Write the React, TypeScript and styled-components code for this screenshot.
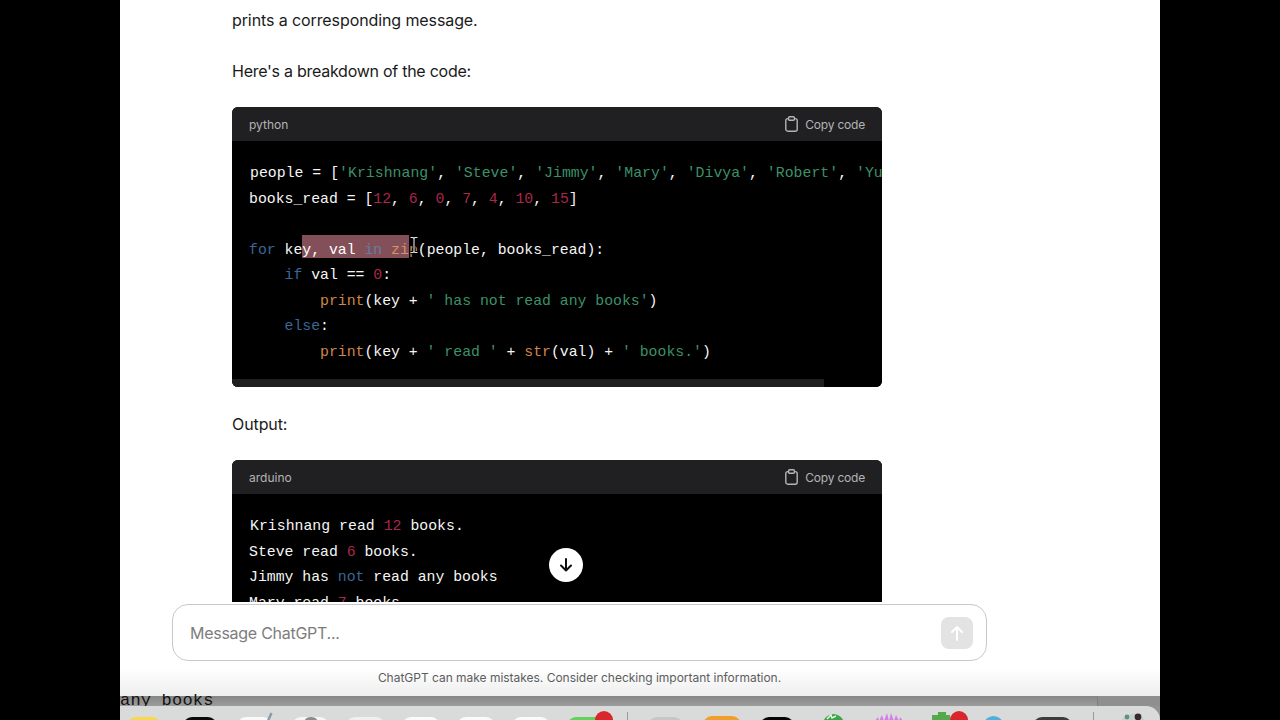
import React from "react";
import styled, { createGlobalStyle } from "styled-components";

const Global = createGlobalStyle`
  html, body { margin: 0; padding: 0; background: #000; height: 100%; overflow: hidden; }
  #root { height: 100%; }
`;

const Page = styled.div`
  width: 1280px; height: 720px; background: #000; display: flex; justify-content: center; overflow: hidden;
`;
const Screen = styled.div`
  width: 1040px; height: 720px; background: #939393; display: flex; flex-direction: column; position: relative; overflow: hidden;
`;
const Chat = styled.main`
  height: 696px; flex: none; position: relative; overflow: hidden; padding: 8px 0 0 112px; box-sizing: border-box; background: #fff;
  font-family: Inter, "Liberation Sans", sans-serif; color: #0d0d0d;
`;
const Thread = styled.div`
  width: 650px; display: flex; flex-direction: column;
`;
const Para = styled.p<{ $after: number; $track: number }>`
  margin: 0 0 ${p => p.$after}px; font-size: 16px; line-height: 24px; letter-spacing: ${p => p.$track}px; color: #1a1a1a;
`;
const CodeCard = styled.section<{ $after?: number }>`
  background: #000; border-radius: 6px; overflow: hidden; margin-bottom: ${p => p.$after ?? 0}px; flex: none;
`;
const CodeHead = styled.header`
  height: 34px; background: #202023; display: flex; align-items: center; justify-content: space-between; padding: 0 17px;
  font-size: 12px; color: #b4b4b4;
`;
const CopyBtn = styled.span`
  display: flex; align-items: center; gap: 7px; letter-spacing: -0.2px;
`;
const CodeBody = styled.div`
  padding: 20px 0 0 17px; font-family: "Liberation Mono", "DejaVu Sans Mono", monospace; font-size: 14.8px;
  color: #f6f6f6; overflow: hidden; position: relative;
`;
const CodeLine = styled.div<{ $indent?: number; $lead?: boolean }>`
  height: 25.5px; line-height: 25.5px; white-space: pre;
  padding-left: ${p => (p.$indent ?? 0) * 8.88 + (p.$lead ? 1 : 0)}px;
  letter-spacing: ${p => (p.$lead ? "0.03px" : "0")};
`;
const ScrollTrack = styled.div`
  height: 8px; background: #000; margin-top: 14px; display: flex;
`;
const ScrollThumb = styled.div`
  width: 592px; background: #1f1f1f;
`;
const Str = styled.span` color: #3c9169; `;
const Num = styled.span` color: #ab274a; `;
const Kw = styled.span` color: #3a6796; `;
const Fn = styled.span` color: #d2854b; `;
const Sel = styled.span`
  background: #83505a; color: #fff; padding-top: 7px;
`;
const SelKw = styled.span` color: #5f7fa2; `;
const SelFn = styled.span` color: #d6935e; `;
const CursorMark = styled.svg`
  position: absolute; left: 177px; top: 95px;
`;
const Fade = styled.div`
  position: absolute; left: 0; right: 0; top: 602px; bottom: 0; background: linear-gradient(#fff 0%, #fff 70%, #eeeeee 100%);
`;
const Composer = styled.div`
  position: absolute; left: 52px; top: 604px; width: 815px; height: 57px; box-sizing: border-box; border: 1px solid #c9c9c9; border-radius: 16px;
  background: #fff; display: flex; align-items: center; justify-content: space-between; padding: 0 13px 0 17px;
`;
const Placeholder = styled.span`
  font-size: 16px; color: #7d7d7d; letter-spacing: -0.27px;
`;
const SendBtn = styled.span`
  width: 32px; height: 32px; border-radius: 8px; background: #e3e3e3; display: flex; align-items: center; justify-content: center;
`;
const Notice = styled.div`
  position: absolute; left: 52px; top: 670px; width: 815px; text-align: center; font-size: 12px; line-height: 16px; color: #5d5d5d; letter-spacing: -0.02px;
`;
const DownBtn = styled.span`
  position: absolute; left: 429px; top: 548px; width: 34px; height: 34px; border-radius: 50%; background: #fff;
  display: flex; align-items: center; justify-content: center;
`;
const Bar = styled.div`
  height: 10px; flex: none; background: linear-gradient(#868686, #9c9c9c); position: relative;
  font-family: "Liberation Mono", monospace; font-size: 17px; color: #111;
`;
const BarText = styled.span`
  position: absolute; left: 0; top: -2px; height: 12px; overflow: hidden; line-height: 13px; letter-spacing: 0.2px;
`;
const BarEnd = styled.span`
  position: absolute; right: 0; top: 0; bottom: 0; width: 62px; background: #8f8f8f; border-left: 1px solid #7f7f7f;
`;
const Dock = styled.footer`
  flex: 1; background: #d9dbda; border-radius: 0 20px 0 0; display: flex; align-items: flex-start; overflow: hidden;
`;
const Tile = styled.span<{ $ml: number; $w: number; $c: string; $t?: number; $round?: boolean }>`
  position: relative; flex: none; margin-left: ${p => p.$ml}px; margin-top: ${p => p.$t ?? 11}px; width: ${p => p.$w}px; height: 40px;
  border-radius: ${p => (p.$round ? "50%" : "9px")}; background: ${p => p.$c};
`;
const Glyph = styled.svg`
  position: absolute; overflow: visible;
`;
const Badge = styled.span<{ $x: number }>`
  position: absolute; left: ${p => p.$x}px; top: -6px; width: 18px; height: 18px; border-radius: 50%; background: #d9252c;
`;
const DockSep = styled.span<{ $ml: number }>`
  flex: none; margin-left: ${p => p.$ml}px; margin-top: 6px; width: 1px; height: 14px; background: #9a9a9a;
`;
const PlainIcon = styled.span<{ $ml: number; $w: number }>`
  position: relative; flex: none; margin-left: ${p => p.$ml}px; margin-top: 6px; width: ${p => p.$w}px; height: 14px;
`;

const Clipboard = () => (
  <svg width="13" height="16" viewBox="0 0 13 16" fill="none" stroke="#b4b4b4" strokeWidth="1.4">
    <rect x="0.8" y="2.6" width="11.4" height="12.6" rx="2" />
    <rect x="3.6" y="0.8" width="5.8" height="3.4" rx="1" fill="#202023" />
  </svg>
);

export default function App() {
  return (
    <Page>
      <Global />
      <Screen>
        <Chat>
          <Thread>
            <Para $after={27} $track={-0.1}>prints a corresponding message.</Para>
            <Para $after={24} $track={-0.26}>Here's a breakdown of the code:</Para>
            <CodeCard $after={25}>
              <CodeHead>
                <span>python</span>
                <CopyBtn><Clipboard />Copy code</CopyBtn>
              </CodeHead>
              <CodeBody>
                <CodeLine $lead>people = [<Str>'Krishnang'</Str>, <Str>'Steve'</Str>, <Str>'Jimmy'</Str>, <Str>'Mary'</Str>, <Str>'Divya'</Str>, <Str>'Robert'</Str>, <Str>'Yu</Str></CodeLine>
                <CodeLine>books_read = [<Num>12</Num>, <Num>6</Num>, <Num>0</Num>, <Num>7</Num>, <Num>4</Num>, <Num>10</Num>, <Num>15</Num>]</CodeLine>
                <CodeLine />
                <CodeLine><Kw>for</Kw> ke<Sel>y, val <SelKw>in</SelKw> <SelFn>zi</SelFn></Sel><Fn>p</Fn>(people, books_read):</CodeLine>
                <CodeLine $indent={4}><Kw>if</Kw> val == <Num>0</Num>:</CodeLine>
                <CodeLine $indent={8}><Fn>print</Fn>(key + <Str>' has not read any books'</Str>)</CodeLine>
                <CodeLine $indent={4}><Kw>else</Kw>:</CodeLine>
                <CodeLine $indent={8}><Fn>print</Fn>(key + <Str>' read '</Str> + <Fn>str</Fn>(val) + <Str>' books.'</Str>)</CodeLine>
                <CursorMark width="10" height="18" viewBox="0 0 10 18" fill="none">
                  <path d="M1.5 1.5h2.5l1 1 1-1h2.5M5 2.5v13M1.5 16.5h2.5l1-1 1 1h2.5" stroke="#000" strokeWidth="2.8" />
                  <path d="M1.5 1.5h2.5l1 1 1-1h2.5M5 2.5v13M1.5 16.5h2.5l1-1 1 1h2.5" stroke="#e8e8e8" strokeWidth="1.1" />
                </CursorMark>
              </CodeBody>
              <ScrollTrack><ScrollThumb /></ScrollTrack>
            </CodeCard>
            <Para $after={24} $track={-0.1}>Output:</Para>
            <CodeCard>
              <CodeHead>
                <span>arduino</span>
                <CopyBtn><Clipboard />Copy code</CopyBtn>
              </CodeHead>
              <CodeBody>
                <CodeLine $lead>Krishnang read <Num>12</Num> books.</CodeLine>
                <CodeLine>Steve read <Num>6</Num> books.</CodeLine>
                <CodeLine>Jimmy has <Kw>not</Kw> read any books</CodeLine>
                <CodeLine>Mary read <Num>7</Num> books.</CodeLine>
              </CodeBody>
            </CodeCard>
          </Thread>
          <DownBtn>
            <svg width="16" height="16" viewBox="0 0 16 16" fill="none" stroke="#0d0d0d" strokeWidth="2" strokeLinecap="round" strokeLinejoin="round">
              <path d="M8 2v11.5M3 8.5l5 5 5-5" />
            </svg>
          </DownBtn>
          <Fade />
          <Composer>
            <Placeholder>Message ChatGPT...</Placeholder>
            <SendBtn>
              <svg width="18" height="18" viewBox="0 0 18 18" fill="none" stroke="#fff" strokeWidth="2" strokeLinecap="round" strokeLinejoin="round">
                <path d="M9 16V3M4 8l5-5 5 5" />
              </svg>
            </SendBtn>
          </Composer>
          <Notice>ChatGPT can make mistakes. Consider checking important information.</Notice>
        </Chat>
        <Bar>
          <BarText>any books</BarText>
          <BarEnd />
        </Bar>
        <Dock>
          <Tile $ml={7} $w={34} $c="#f6d84a" />
          <Tile $ml={22} $w={34} $c="#0a0a0a" />
          <Tile $ml={20} $w={35} $c="#fafafa">
            <Glyph width="8" height="10" viewBox="0 0 8 10" style={{ left: 29, top: -5 }} fill="none">
              <path d="M1.5 10L5.5 1" stroke="#8a98a6" strokeWidth="2.4" />
            </Glyph>
          </Tile>
          <Tile $ml={20} $w={37} $c="#f6f6f6">
            <Glyph width="14" height="4" viewBox="0 0 14 4" style={{ left: 12, top: 0 }}>
              <ellipse cx="7" cy="3" rx="6" ry="3" fill="#8c8c8c" />
            </Glyph>
          </Tile>
          <Tile $ml={17} $w={39} $c="#efefef" />
          <Tile $ml={17} $w={38} $c="#fbfbfb" />
          <Tile $ml={17} $w={38} $c="#fbfbfb" />
          <Tile $ml={17} $w={38} $c="#fbfbfb" />
          <Tile $ml={17} $w={38} $c="#5fd35a">
            <Badge $x={28} />
          </Tile>
          <DockSep $ml={22} />
          <Tile $ml={20} $w={35} $c="#c6c6c6" />
          <Tile $ml={20} $w={38} $c="#ee9f2c" $t={10} />
          <Tile $ml={19} $w={34} $c="#050505" />
          <Tile $ml={26} $w={27} $c="#3aa64a" $t={8} $round>
            <Glyph width="12" height="5" viewBox="0 0 12 5" style={{ left: 6, top: 1 }}>
              <path d="M1 4L5 0l1 3 4-2" stroke="#e8f5e8" strokeWidth="1.5" fill="none" />
            </Glyph>
          </Tile>
          <PlainIcon $ml={26} $w={32}>
            <Glyph width="32" height="8" viewBox="0 0 32 8" style={{ left: 0, top: 1 }}>
              <path d="M2 8L5 4l1 4 3-6 2 6 3-8 2 8 2-8 3 8 2-6 3 6 1-4 3 4z" fill="#d27fe6" />
            </Glyph>
          </PlainIcon>
          <PlainIcon $ml={27} $w={18}>
            <Glyph width="18" height="8" viewBox="0 0 18 8" style={{ left: 0, top: 0 }}>
              <path d="M6 0h8v3h4v5H0V3h6z" fill="#55a84b" />
            </Glyph>
            <Badge $x={18} style={{ top: -1 }} />
          </PlainIcon>
          <Tile $ml={30} $w={27} $c="#4fb0dc" $t={10} $round />
          <Tile $ml={26} $w={39} $c="#3c3c3c" />
          <DockSep $ml={21} />
          <PlainIcon $ml={24} $w={30}>
            <Glyph width="30" height="8" viewBox="0 0 30 8" style={{ left: 0, top: 1 }}>
              <path d="M3 8a12 12 0 0 1 12-7 12 12 0 0 1 12 7z" fill="#c7d0cc" />
              <circle cx="20" cy="4" r="3.4" fill="#3a2a2e" />
              <circle cx="9" cy="4" r="2.4" fill="#5f8f8a" />
            </Glyph>
          </PlainIcon>
        </Dock>
      </Screen>
    </Page>
  );
}
